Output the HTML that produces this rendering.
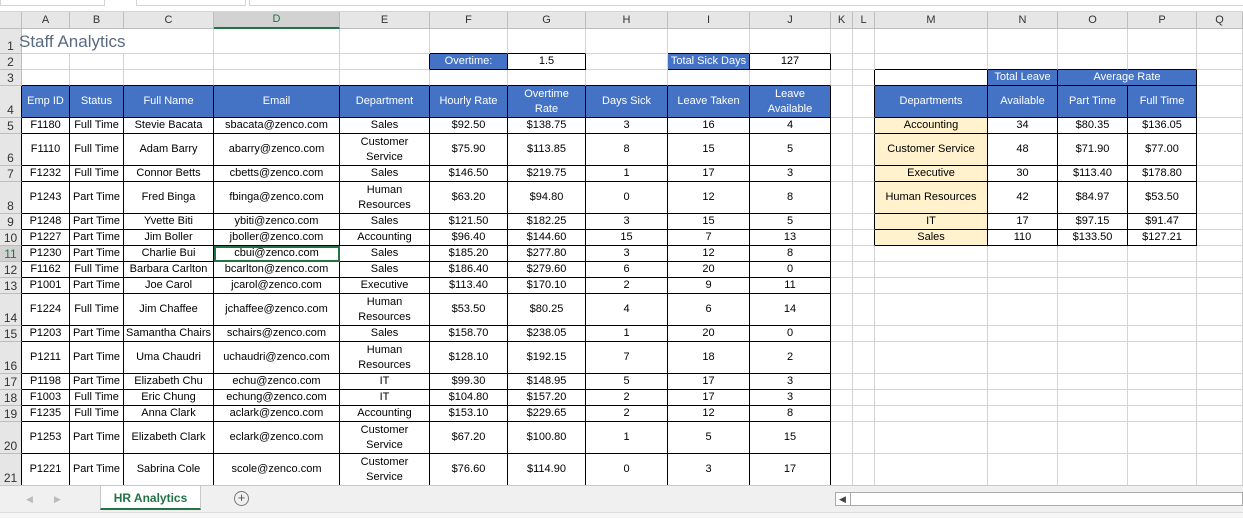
<!DOCTYPE html>
<html><head><meta charset="utf-8"><style>
*{margin:0;padding:0;box-sizing:border-box}
body{width:1243px;height:517px;overflow:hidden;background:#fff;font-family:"Liberation Sans",sans-serif;font-size:11px;color:#000;position:relative}
#top{position:absolute;left:0;top:0;width:1243px;height:12px;background:#fff;border-bottom:1px solid #d4d4d4}
table{position:absolute;left:0;top:12px;border-collapse:separate;border-spacing:0;table-layout:fixed;width:1243px}
td{border-right:1px solid #d4d4d4;border-bottom:1px solid #d4d4d4;text-align:center;vertical-align:middle;white-space:nowrap;overflow:hidden;line-height:15px;padding:0}
tr.ch td{background:#e6e6e6;color:#333;height:15px;border-color:#bdbdbd;font-size:11px}
td.rh{background:#e6e6e6;color:#333;vertical-align:bottom;border-color:#bdbdbd;font-size:12px;padding-bottom:0;line-height:13px}
tr.d td:nth-child(n+2):nth-child(-n+11){border-right-color:#000;border-bottom-color:#000}
tr.r td:nth-child(n+14):nth-child(-n+17){border-right-color:#000;border-bottom-color:#000}
tr.r td:nth-child(13){border-right-color:#000}
tr.d td:nth-child(1){border-right-color:#000}
tr.hd td:nth-child(n+2):nth-child(-n+11),tr.hd td:nth-child(n+14):nth-child(-n+17){background:#4472c4;color:#fff}
tr.r td:nth-child(14){background:#fff2cc}
tr.hd td:nth-child(14){background:#4472c4}
.bb{border-bottom-color:#000!important}
.br{border-right-color:#000!important}
.bl{background:#4472c4;color:#fff}
.sel{outline:2px solid #217346;outline-offset:-2px}
</style></head><body>
<div id="top"><div style="position:absolute;left:0;top:0;width:105px;height:6px;border:1px solid #d4d4d4;border-top:0"></div><div style="position:absolute;left:136px;top:0;width:110px;height:6px;border:1px solid #d4d4d4;border-top:0"></div><div style="position:absolute;left:249px;top:0;width:994px;height:6px;border-left:1px solid #d4d4d4;border-bottom:1px solid #d4d4d4"></div></div>
<table>
<colgroup><col style="width:22px"><col style="width:48px"><col style="width:54px"><col style="width:90px"><col style="width:126px"><col style="width:90px"><col style="width:78px"><col style="width:78px"><col style="width:82px"><col style="width:82px"><col style="width:81px"><col style="width:22px"><col style="width:22px"><col style="width:113px"><col style="width:70px"><col style="width:70px"><col style="width:69px"><col style="width:46px"></colgroup>
<tr class="ch"><td></td><td>A</td><td>B</td><td>C</td><td style="background:#d2d2d2;border-bottom:2px solid #217346;color:#217346">D</td><td>E</td><td>F</td><td>G</td><td>H</td><td>I</td><td>J</td><td>K</td><td>L</td><td>M</td><td>N</td><td>O</td><td>P</td><td>Q</td></tr>
<tr style="height:25px"><td class="rh">1</td><td colspan="3" style="text-align:left;font-size:17px;color:#5a6a80;overflow:visible;position:relative"><span style="position:relative;left:-3px">Staff Analytics</span></td><td></td><td></td><td class="bb"></td><td class="bb"></td><td></td><td class="bb"></td><td class="bb"></td><td></td><td></td><td></td><td></td><td></td><td></td><td></td></tr>
<tr style="height:16px"><td class="rh">2</td><td></td><td></td><td></td><td></td><td class="br"></td><td class="bl br bb">Overtime:</td><td class="br bb">1.5</td><td></td><td class="bl bb" style="border-right-color:#000">Total Sick Days</td><td class="br bb">127</td><td></td><td></td><td class="bb"></td><td class="bb"></td><td class="bb"></td><td class="bb"></td><td></td></tr>
<tr style="height:16px"><td class="rh">3</td><td class="bb"></td><td class="bb"></td><td class="bb"></td><td class="bb"></td><td class="bb"></td><td class="bb"></td><td class="bb"></td><td class="bb"></td><td class="bb"></td><td class="bb"></td><td></td><td class="br"></td><td class="br bb"></td><td class="bl br bb">Total Leave</td><td colspan="2" class="bl br bb">Average Rate</td><td></td></tr>
<tr class="d r hd" style="height:32px"><td class="rh">4</td><td>Emp ID</td><td>Status</td><td>Full Name</td><td>Email</td><td>Department</td><td>Hourly Rate</td><td>Overtime<br>Rate</td><td>Days Sick</td><td>Leave Taken</td><td>Leave<br>Available</td><td></td><td></td><td>Departments</td><td>Available</td><td>Part Time</td><td>Full Time</td><td></td></tr>
<tr class="d r" style="height:16px"><td class="rh">5</td><td>F1180</td><td>Full Time</td><td>Stevie Bacata</td><td>sbacata@zenco.com</td><td>Sales</td><td>$92.50</td><td>$138.75</td><td>3</td><td>16</td><td>4</td><td></td><td></td><td>Accounting</td><td>34</td><td>$80.35</td><td>$136.05</td><td></td></tr>
<tr class="d r" style="height:32px"><td class="rh">6</td><td>F1110</td><td>Full Time</td><td>Adam Barry</td><td>abarry@zenco.com</td><td>Customer<br>Service</td><td>$75.90</td><td>$113.85</td><td>8</td><td>15</td><td>5</td><td></td><td></td><td>Customer Service</td><td>48</td><td>$71.90</td><td>$77.00</td><td></td></tr>
<tr class="d r" style="height:16px"><td class="rh">7</td><td>F1232</td><td>Full Time</td><td>Connor Betts</td><td>cbetts@zenco.com</td><td>Sales</td><td>$146.50</td><td>$219.75</td><td>1</td><td>17</td><td>3</td><td></td><td></td><td>Executive</td><td>30</td><td>$113.40</td><td>$178.80</td><td></td></tr>
<tr class="d r" style="height:32px"><td class="rh">8</td><td>P1243</td><td>Part Time</td><td>Fred Binga</td><td>fbinga@zenco.com</td><td>Human<br>Resources</td><td>$63.20</td><td>$94.80</td><td>0</td><td>12</td><td>8</td><td></td><td></td><td>Human Resources</td><td>42</td><td>$84.97</td><td>$53.50</td><td></td></tr>
<tr class="d r" style="height:16px"><td class="rh">9</td><td>P1248</td><td>Part Time</td><td>Yvette Biti</td><td>ybiti@zenco.com</td><td>Sales</td><td>$121.50</td><td>$182.25</td><td>3</td><td>15</td><td>5</td><td></td><td></td><td>IT</td><td>17</td><td>$97.15</td><td>$91.47</td><td></td></tr>
<tr class="d r" style="height:16px"><td class="rh">10</td><td>P1227</td><td>Part Time</td><td>Jim Boller</td><td>jboller@zenco.com</td><td>Accounting</td><td>$96.40</td><td>$144.60</td><td>15</td><td>7</td><td>13</td><td></td><td></td><td>Sales</td><td>110</td><td>$133.50</td><td>$127.21</td><td></td></tr>
<tr class="d" style="height:16px"><td class="rh" style="background:#d2d2d2;color:#217346">11</td><td>P1230</td><td>Part Time</td><td>Charlie Bui</td><td class="sel">cbui@zenco.com</td><td>Sales</td><td>$185.20</td><td>$277.80</td><td>3</td><td>12</td><td>8</td><td></td><td></td><td></td><td></td><td></td><td></td><td></td></tr>
<tr class="d" style="height:16px"><td class="rh">12</td><td>F1162</td><td>Full Time</td><td>Barbara Carlton</td><td>bcarlton@zenco.com</td><td>Sales</td><td>$186.40</td><td>$279.60</td><td>6</td><td>20</td><td>0</td><td></td><td></td><td></td><td></td><td></td><td></td><td></td></tr>
<tr class="d" style="height:16px"><td class="rh">13</td><td>P1001</td><td>Part Time</td><td>Joe Carol</td><td>jcarol@zenco.com</td><td>Executive</td><td>$113.40</td><td>$170.10</td><td>2</td><td>9</td><td>11</td><td></td><td></td><td></td><td></td><td></td><td></td><td></td></tr>
<tr class="d" style="height:32px"><td class="rh">14</td><td>F1224</td><td>Full Time</td><td>Jim Chaffee</td><td>jchaffee@zenco.com</td><td>Human<br>Resources</td><td>$53.50</td><td>$80.25</td><td>4</td><td>6</td><td>14</td><td></td><td></td><td></td><td></td><td></td><td></td><td></td></tr>
<tr class="d" style="height:16px"><td class="rh">15</td><td>P1203</td><td>Part Time</td><td>Samantha Chairs</td><td>schairs@zenco.com</td><td>Sales</td><td>$158.70</td><td>$238.05</td><td>1</td><td>20</td><td>0</td><td></td><td></td><td></td><td></td><td></td><td></td><td></td></tr>
<tr class="d" style="height:32px"><td class="rh">16</td><td>P1211</td><td>Part Time</td><td>Uma Chaudri</td><td>uchaudri@zenco.com</td><td>Human<br>Resources</td><td>$128.10</td><td>$192.15</td><td>7</td><td>18</td><td>2</td><td></td><td></td><td></td><td></td><td></td><td></td><td></td></tr>
<tr class="d" style="height:16px"><td class="rh">17</td><td>P1198</td><td>Part Time</td><td>Elizabeth Chu</td><td>echu@zenco.com</td><td>IT</td><td>$99.30</td><td>$148.95</td><td>5</td><td>17</td><td>3</td><td></td><td></td><td></td><td></td><td></td><td></td><td></td></tr>
<tr class="d" style="height:16px"><td class="rh">18</td><td>F1003</td><td>Full Time</td><td>Eric Chung</td><td>echung@zenco.com</td><td>IT</td><td>$104.80</td><td>$157.20</td><td>2</td><td>17</td><td>3</td><td></td><td></td><td></td><td></td><td></td><td></td><td></td></tr>
<tr class="d" style="height:16px"><td class="rh">19</td><td>F1235</td><td>Full Time</td><td>Anna Clark</td><td>aclark@zenco.com</td><td>Accounting</td><td>$153.10</td><td>$229.65</td><td>2</td><td>12</td><td>8</td><td></td><td></td><td></td><td></td><td></td><td></td><td></td></tr>
<tr class="d" style="height:32px"><td class="rh">20</td><td>P1253</td><td>Part Time</td><td>Elizabeth Clark</td><td>eclark@zenco.com</td><td>Customer<br>Service</td><td>$67.20</td><td>$100.80</td><td>1</td><td>5</td><td>15</td><td></td><td></td><td></td><td></td><td></td><td></td><td></td></tr>
<tr class="d" style="height:32px"><td class="rh">21</td><td>P1221</td><td>Part Time</td><td>Sabrina Cole</td><td>scole@zenco.com</td><td>Customer<br>Service</td><td>$76.60</td><td>$114.90</td><td>0</td><td>3</td><td>17</td><td></td><td></td><td></td><td></td><td></td><td></td><td></td></tr>
</table>
<div style="position:absolute;left:0;top:485px;width:1243px;height:32px;background:#f0f0f0;border-top:1px solid #c8c8c8">
<div style="position:absolute;left:26px;top:8px;color:#bbb;font-size:9px">◀</div>
<div style="position:absolute;left:54px;top:8px;color:#bbb;font-size:9px">▶</div>
<div style="position:absolute;left:100px;top:0;width:101px;height:24px;background:#fff;border-bottom:2px solid #217346;border-left:1px solid #c8c8c8;border-right:1px solid #c8c8c8;color:#217346;font-weight:bold;font-size:12px;text-align:center;line-height:24px">HR Analytics</div>
<div style="position:absolute;left:234px;top:5px;width:15px;height:15px;border:1px solid #777;border-radius:50%;color:#555;font-size:13px;line-height:12px;text-align:center">+</div>
<div style="position:absolute;left:835px;top:6px;width:408px;height:14px;background:#fff;border:1px solid #aaa"><span style="position:absolute;left:3px;top:0;font-size:9px;color:#444;line-height:12px">◀</span><div style="position:absolute;left:14px;top:-1px;width:1px;height:14px;background:#aaa"></div></div>
<div style="position:absolute;left:0;top:26px;width:1243px;height:6px;background:#f7f7f7;border-top:1px solid #ddd"></div>
</div>
</body></html>
